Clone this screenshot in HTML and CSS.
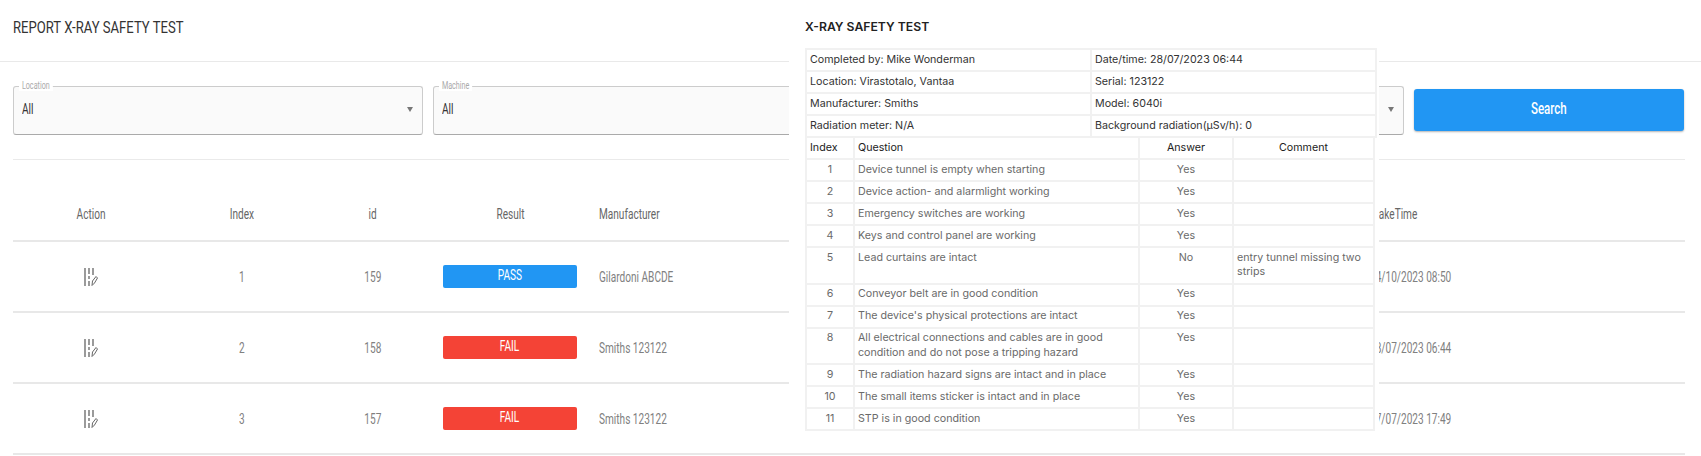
FILE: index.html
```html
<!DOCTYPE html>
<html lang="en">
<head>
<meta charset="utf-8">
<title>Report X-Ray Safety Test</title>
<link rel="stylesheet" href="styles.css">
</head>
<body>
<header class="page-header"><h1 class="squeeze title">REPORT X-RAY SAFETY TEST</h1></header>
<main class="content">
  <section class="filters">
    <div class="select"><span class="legend squeeze">Location</span><span class="squeeze value">All</span><span class="arrow"></span></div>
    <div class="select"><span class="legend squeeze">Machine</span><span class="squeeze value">All</span><span class="arrow"></span></div>
    <div class="select"><span class="arrow"></span></div>
    <button class="search"><span class="squeeze">Search</span></button>
  </section>
  <section class="grid-table">
    <div class="row head">
      <div class="cell center"><span class="squeeze">Action</span></div>
      <div class="cell center"><span class="squeeze">Index</span></div>
      <div class="cell center"><span class="squeeze">id</span></div>
      <div class="cell center"><span class="squeeze">Result</span></div>
      <div class="cell"><span class="squeeze">Manufacturer</span></div>
      <div class="cell"><span class="squeeze">MakeTime</span></div>
    </div>
    <div class="row">
      <div class="cell center"><svg class="action" viewBox="0 0 14 18"><path d="M1 0v18M5 0v6M5 8v3M5 13v5M9 0v7"/><path class="pencil" d="M8 17.500l.5-4.500 3.500-4.500 1.500 1.500-3 5z"/></svg></div>
      <div class="cell center"><span class="squeeze">1</span></div>
      <div class="cell center"><span class="squeeze">159</span></div>
      <div class="cell center"><span class="badge pass"><span class="squeeze">PASS</span></span></div>
      <div class="cell"><span class="squeeze">Gilardoni ABCDE</span></div>
      <div class="cell"><span class="squeeze">14/10/2023 08:50</span></div>
    </div>
    <div class="row">
      <div class="cell center"><svg class="action" viewBox="0 0 14 18"><path d="M1 0v18M5 0v6M5 8v3M5 13v5M9 0v7"/><path class="pencil" d="M8 17.500l.5-4.500 3.500-4.500 1.500 1.500-3 5z"/></svg></div>
      <div class="cell center"><span class="squeeze">2</span></div>
      <div class="cell center"><span class="squeeze">158</span></div>
      <div class="cell center"><span class="badge fail"><span class="squeeze">FAIL</span></span></div>
      <div class="cell"><span class="squeeze">Smiths 123122</span></div>
      <div class="cell"><span class="squeeze">28/07/2023 06:44</span></div>
    </div>
    <div class="row">
      <div class="cell center"><svg class="action" viewBox="0 0 14 18"><path d="M1 0v18M5 0v6M5 8v3M5 13v5M9 0v7"/><path class="pencil" d="M8 17.500l.5-4.500 3.500-4.500 1.500 1.500-3 5z"/></svg></div>
      <div class="cell center"><span class="squeeze">3</span></div>
      <div class="cell center"><span class="squeeze">157</span></div>
      <div class="cell center"><span class="badge fail"><span class="squeeze">FAIL</span></span></div>
      <div class="cell"><span class="squeeze">Smiths 123122</span></div>
      <div class="cell"><span class="squeeze">27/07/2023 17:49</span></div>
    </div>
  </section>
</main>
<aside class="report">
  <h2 class="report-title">X-RAY SAFETY TEST</h2>
  <table class="meta">
    <tr><td>Completed by: Mike Wonderman</td><td>Date/time: 28/07/2023 06:44</td></tr>
    <tr><td>Location: Virastotalo, Vantaa</td><td>Serial: 123122</td></tr>
    <tr><td>Manufacturer: Smiths</td><td>Model: 6040i</td></tr>
    <tr><td>Radiation meter: N/A</td><td>Background radiation(µSv/h): 0</td></tr>
  </table>
  <table class="questions">
    <colgroup><col class="c-index"><col class="c-question"><col class="c-answer"><col></colgroup>
    <tr class="q-head"><td>Index</td><td>Question</td><td class="mid">Answer</td><td class="mid">Comment</td></tr>
    <tr><td class="mid">1</td><td>Device tunnel is empty when starting</td><td class="mid">Yes</td><td></td></tr>
    <tr><td class="mid">2</td><td>Device action- and alarmlight working</td><td class="mid">Yes</td><td></td></tr>
    <tr><td class="mid">3</td><td>Emergency switches are working</td><td class="mid">Yes</td><td></td></tr>
    <tr><td class="mid">4</td><td>Keys and control panel are working</td><td class="mid">Yes</td><td></td></tr>
    <tr><td class="mid">5</td><td>Lead curtains are intact</td><td class="mid">No</td><td>entry tunnel missing two strips</td></tr>
    <tr><td class="mid">6</td><td>Conveyor belt are in good condition</td><td class="mid">Yes</td><td></td></tr>
    <tr><td class="mid">7</td><td>The device's physical protections are intact</td><td class="mid">Yes</td><td></td></tr>
    <tr><td class="mid">8</td><td>All electrical connections and cables are in good condition and do not pose a tripping hazard</td><td class="mid">Yes</td><td></td></tr>
    <tr><td class="mid">9</td><td>The radiation hazard signs are intact and in place</td><td class="mid">Yes</td><td></td></tr>
    <tr><td class="mid">10</td><td>The small items sticker is intact and in place</td><td class="mid">Yes</td><td></td></tr>
    <tr><td class="mid">11</td><td>STP is in good condition</td><td class="mid">Yes</td><td></td></tr>
  </table>
</aside>
</body>
</html>
```
FILE: styles.css
```css
* { box-sizing: border-box; }
html, body { margin: 0; height: 456px; overflow: hidden; background: #fff; }
body { font-family: Roboto, sans-serif; color: #808080; position: relative; }
.squeeze { display: inline-block; transform: scaleX(0.72); white-space: nowrap; }
.page-header { height: 62px; border-bottom: 1px solid #e9e9e9; padding: 16px 13px 0; }
.title { margin: 0; font-size: 17px; line-height: 22px; font-weight: 400; color: #333; transform: scaleX(0.77); transform-origin: left center; }
.content { padding: 0 16px 0 13px; }
.filters { display: grid; grid-template-columns: 410px 480px 481px 270px; column-gap: 10px; align-items: center; height: 98px; border-bottom: 1px solid #eaeaea; }
.select { position: relative; height: 49px; border: 1px solid #ccc; border-bottom-color: #aaa; border-radius: 3px; background: #fafafa; display: flex; align-items: center; padding: 0 8px 3px; }
.select .value { font-size: 14px; color: #333; transform-origin: left center; }
.legend { position: absolute; left: 5px; top: -6px; background: #fff; padding: 0 4px; font-size: 10px; line-height: 10px; color: #aaa; transform-origin: left center; height: 10px; }
.arrow { position: absolute; right: 9px; top: 20px; border: 3.500px solid transparent; border-top: 5px solid #777; border-bottom: 0; }
.search { height: 42px; border: 0; border-radius: 3px; background: #2196f3; color: #fff; font: 500 16px Roboto, sans-serif; box-shadow: 0 1px 2px rgba(0,0,0,.3); margin-top: -2px; padding-bottom: 3px; }
.grid-table { display: block; }
.row { display: grid; grid-template-columns: 156px 146px 116px 158px 771px 1fr; height: 71px; align-items: center; border-bottom: 2px solid #e8e8e8; font-size: 14px; }
.row.head { height: 82px; padding-top: 28px; align-items: center; font-size: 14px; color: #666; }
.cell { padding: 0 10px; white-space: nowrap; }
.cell .squeeze { transform-origin: left center; }
.cell.center { text-align: center; padding: 0; }
.cell.center .squeeze { transform-origin: center; }
.action { width: 14px; height: 18px; display: block; margin: 0 auto; fill: none; stroke: #666; stroke-width: 1.3; }
.action .pencil { stroke-width: 1; }
.badge { display: block; width: 134px; height: 23px; line-height: 21px; margin: 0 auto; border-radius: 2px; color: #fff; font-size: 14px; }
.pass { background: #2196f3; }
.fail { background: #f44336; }
.report { position: absolute; left: 789px; top: 0; width: 590px; height: 450px; background: #fff; padding: 18px 0 0 16px; font-family: Inter, sans-serif; font-size: 10.7px; line-height: 14.500px; }
.report-title { margin: 0 0 12px; font-size: 12.2px; line-height: 18px; font-weight: 600; color: #222; }
.report table { border-collapse: collapse; table-layout: fixed; width: 570px; }
.report td { border: 2px solid #f1f1f1; padding: 2.750px 3px; vertical-align: top; }
.meta td { color: #333; width: 285px; }
.questions { margin-top: -2px; }
.questions td { color: #6a6a6a; height: 22px; }
.questions .q-head td { color: #222; }
.c-index { width: 48px; }
.c-question { width: 285px; }
.c-answer { width: 94px; }
.mid { text-align: center; }
```
